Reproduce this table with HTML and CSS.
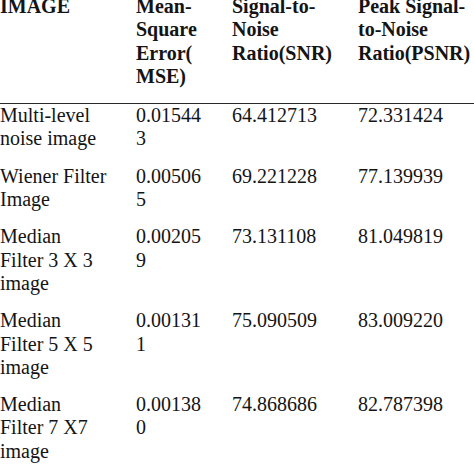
FILE: index.html
```html
<!DOCTYPE html>
<html>
<head>
<meta charset="utf-8">
<link rel="stylesheet" href="styles.css">
</head>
<body>
<table class="results">
  <colgroup>
    <col class="c1"><col class="c2"><col class="c3"><col class="c4">
  </colgroup>
  <thead>
    <tr>
      <th>IMAGE</th>
      <th>Mean-<br>Square<br>Error(<br>MSE)</th>
      <th>Signal-to-<br>Noise<br>Ratio(SNR)</th>
      <th>Peak Signal-<br>to-Noise<br>Ratio(PSNR)</th>
    </tr>
  </thead>
  <tbody>
    <tr>
      <td>Multi-level<br>noise image</td>
      <td class="mse">0.015443</td>
      <td>64.412713</td>
      <td>72.331424</td>
    </tr>
    <tr>
      <td>Wiener Filter<br>Image</td>
      <td class="mse">0.005065</td>
      <td>69.221228</td>
      <td>77.139939</td>
    </tr>
    <tr>
      <td>Median<br>Filter 3 X 3<br>image</td>
      <td class="mse">0.002059</td>
      <td>73.131108</td>
      <td>81.049819</td>
    </tr>
    <tr>
      <td>Median<br>Filter 5 X 5<br>image</td>
      <td class="mse">0.001311</td>
      <td>75.090509</td>
      <td>83.009220</td>
    </tr>
    <tr>
      <td>Median<br>Filter 7 X7<br>image</td>
      <td class="mse">0.001380</td>
      <td>74.868686</td>
      <td>82.787398</td>
    </tr>
  </tbody>
</table>
</body>
</html>
```

FILE: styles.css
```css
html, body {
  margin: 0;
  padding: 0;
  background: #ffffff;
}

body {
  font-family: "Liberation Serif", "Times New Roman", serif;
  font-size: 20px;
  line-height: 23.3px;
  color: #141414;
  overflow: hidden;
}

.results {
  border-collapse: collapse;
  table-layout: fixed;
  width: 480px;
  margin-top: -5px;
}

.c1 { width: 136px; }
.c2 { width: 96px; }
.c3 { width: 126px; }
.c4 { width: 122px; }

.results th,
.results td {
  padding: 0;
  text-align: left;
  vertical-align: top;
}

.results th {
  font-weight: bold;
  padding-bottom: 15px;
  border-bottom: 1.5px solid #2a2a2a;
}

.results td {
  padding-bottom: 14px;
}

.results td.mse {
  word-break: break-all;
  padding-right: 26px;
}
```
